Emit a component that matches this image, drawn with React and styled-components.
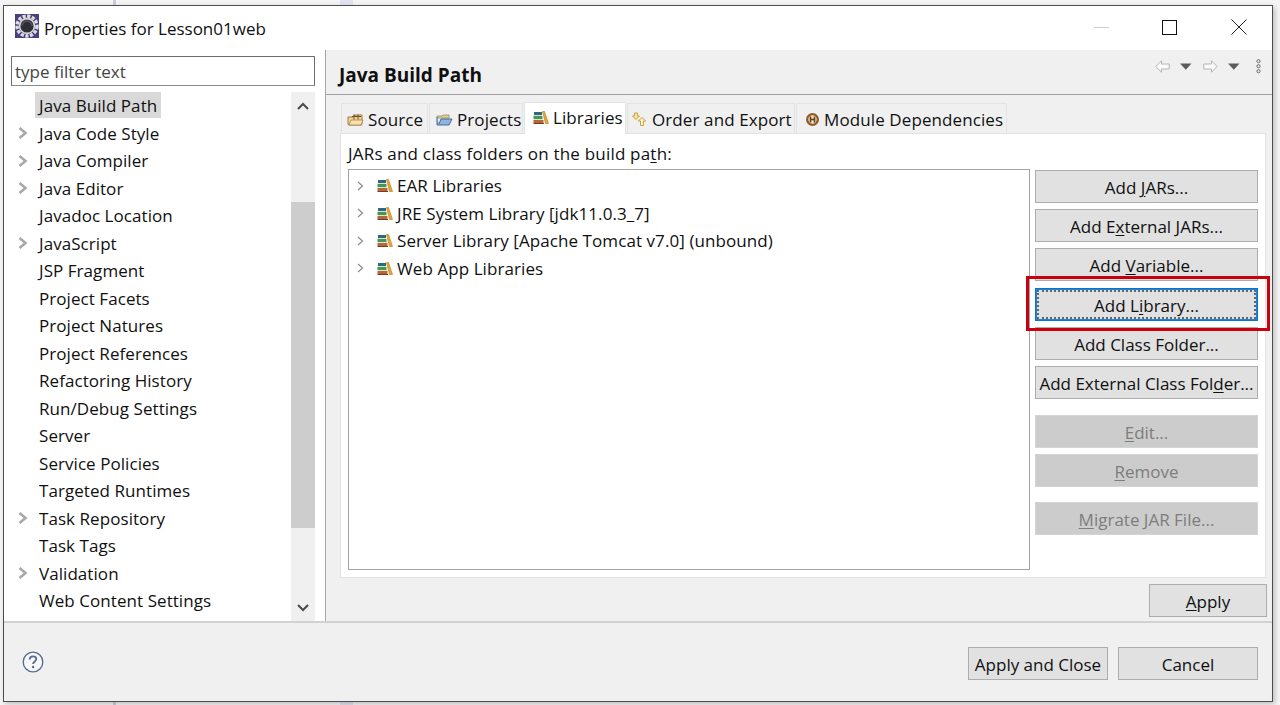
import React from "react";
import styled, { createGlobalStyle } from "styled-components";

const Global = createGlobalStyle`
  html, body { margin: 0; padding: 0; width: 1280px; height: 705px; overflow: hidden; }
  body { font-family: "Open Sans", "Noto Sans", sans-serif; font-size: 17px; color: #101010; }
  * { box-sizing: border-box; }
  u { text-underline-offset: 2px; text-decoration-thickness: 1px; }
`;

const Desktop = styled.div`
  width: 1280px; height: 705px; padding: 5px 7px 3px 3px;
  background:
    linear-gradient(90deg, transparent 113px, #c9cde0 113px, #c9cde0 116px, transparent 116px, transparent 340px, #dfe3ef 340px, #dfe3ef 353px, transparent 353px),
    #f4f4f4;
`;
const Window = styled.div`
  width: 1270px; height: 697px; display: flex; flex-direction: column;
  border: 1px solid #4d4d4d; background: #f0f0f0;
  box-shadow: 2px 2px 5px rgba(0,0,0,.22);
`;
const TitleBar = styled.div`
  height: 44px; flex: none; background: #fff; display: flex; align-items: center; padding: 0 25px 0 11px;
`;
const AppIconWrap = styled.span`
  display: flex; margin-bottom: 5px; flex: none;
`;
const TitleText = styled.div`
  font-size: 17px; margin-left: 5px; flex: 1; letter-spacing: 0;
`;
const WinControls = styled.div`
  display: flex; align-items: center; gap: 54px; margin-bottom: 2px;
  & > :first-child { margin-right: -1px; }
`;
const Main = styled.div`
  flex: 1; min-height: 0; display: flex;
`;
const Sidebar = styled.div`
  width: 322px; flex: none; background: #fff; border-right: 1px solid #a5a5a5; padding: 6px 10px 0 7px;
  display: flex; flex-direction: column;
`;
const Filter = styled.div`
  height: 30px; flex: none; border: 1px solid #6f6f6f; border-bottom-color: #8a8a8a; padding-left: 3px;
  display: flex; align-items: center; color: #444; font-size: 17px;
`;
const SideBody = styled.div`
  flex: 1; min-height: 0; margin-top: 6px; display: flex; overflow: hidden; margin-left: -7px;
`;
const SideTree = styled.div`
  flex: 1; min-width: 0; overflow: hidden;
`;
const SideRow = styled.div`
  height: 27.5px; display: flex; align-items: center; padding-left: 14px;
`;
const ChevBox = styled.span`
  width: 17px; height: 14px; flex: none; display: flex; align-items: center;
`;
const SideLabel = styled.span`
  padding: 0 4px; line-height: 28px; height: 26px; margin-bottom: 1px; white-space: nowrap;
  background: ${p => (p.$sel ? "#d9d9d9" : "transparent")};
  letter-spacing: .06px;
`;
const Scrollbar = styled.div`
  width: 24px; flex: none; background: #f0f0f0; display: flex; flex-direction: column;
`;
const ScrollBtn = styled.div`
  height: 27px; display: flex; align-items: center; justify-content: center; flex: none;
`;
const ScrollThumb = styled.div`
  height: 326px; background: #cdcdcd; margin-top: 83px; margin-bottom: auto;
`;
const Right = styled.div`
  flex: 1; min-width: 0; display: flex; flex-direction: column; padding-bottom: 5px;
`;
const Header = styled.div`
  height: 45px; flex: none; border-bottom: 1px solid #a0a0a0; display: flex; align-items: center; justify-content: space-between; padding: 0 11px 0 13px;
`;
const HeaderTitle = styled.div`
  font-weight: 700; font-size: 19px; margin-top: 6px;
`;
const HeaderTools = styled.div`
  display: flex; align-items: center; margin-bottom: 11px;
`;
const Tabs = styled.div`
  display: flex; align-items: flex-end; margin: 6px 0 0 15px; height: 32px; flex: none; letter-spacing: .1px;
`;
const Tab = styled.div`
  width: ${p => p.$w}px; height: ${p => (p.$active ? 32 : 30)}px; display: flex; align-items: center; gap: 4px;
  padding-left: ${p => p.$pad}px; padding-top: ${p => (p.$active ? 0 : 2)}px; padding-bottom: ${p => (p.$active ? 3 : 0)}px; white-space: nowrap; margin-right: 1px;
  background: ${p => (p.$active ? "#fff" : "#f0f0f0")};
  border: 1px solid #e3e3e3; border-bottom: none;
  position: relative; z-index: ${p => (p.$active ? 1 : 0)};
  margin-bottom: ${p => (p.$active ? "-1px" : "0")};
`;
const TabPanel = styled.div`
  width: 926px; height: 445px; flex: none; margin-left: 14px; background: #fff; border: 1px solid #e3e3e3;
  padding: 7px 7px 7px 7px; display: flex; flex-direction: column;
`;
const PathLabel = styled.div`
  height: 28px; flex: none; line-height: 26px; letter-spacing: .2px;
`;
const PanelBody = styled.div`
  flex: 1; min-height: 0; display: flex; gap: 5px;
`;
const LibTree = styled.div`
  width: 682px; height: 401px; flex: none; border: 1px solid #a3a3a3; padding: 2px 0 0 7px;
`;
const LibRow = styled.div`
  height: 27.5px; display: flex; align-items: center;
`;
const LibChev = styled.span`
  width: 21px; height: 14px; display: flex; align-items: center; flex: none;
`;
const LibText = styled.span`
  margin-left: 4px; white-space: nowrap; letter-spacing: .08px;
`;
const ButtonCol = styled.div`
  width: 223px; flex: none; display: flex; flex-direction: column; padding-top: 1px; position: relative;
`;
const Btn = styled.div`
  height: 33px; width: ${p => p.$width ? p.$width + "px" : "100%"}; flex: none;
  display: flex; align-items: center; justify-content: center; white-space: nowrap;
  background: ${p => (p.$disabled ? "#cccccc" : "#e1e1e1")};
  color: ${p => (p.$disabled ? "#7d7d7d" : "#101010")};
  border: 1px solid ${p => (p.$disabled ? "#d4d4d4" : p.$focus ? "#0078d7" : "#adadad")};
  margin-top: ${p => p.$mt || 0}px;
  padding-top: 1px;
  letter-spacing: 0;
  ${p => p.$focus ? "outline: 2px dotted #666; outline-offset: -4px; box-shadow: inset 0 0 0 1px #2a7fc9;" : ""}
`;
const Callout = styled.div`
  position: absolute; left: -9px; top: 107px; width: 244px; height: 55px; border: 3px solid #c8000f; pointer-events: none;
`;
const ApplyRow = styled.div`
  display: flex; justify-content: flex-end; padding: 6px 5px 0 0;
`;
const Footer = styled.div`
  height: 80px; flex: none; background: #f0f0f0; border-top: 2px solid #d2d2d2; display: flex; align-items: center; padding: 0 14px 0 18px; position: relative; z-index: 1;
`;
const HelpWrap = styled.div`
  flex: 1; display: flex; align-items: center;
`;
const FootBtns = styled.div`
  display: flex; gap: 10px; margin-top: 3px; letter-spacing: .3px;
`;
const ToolGap = styled.span`
  display: inline-block; width: ${p => p.$w}px; flex: none;
`;

const Chevron = ({ c = "#8c8c8c", bold }) => (
  <svg width="10" height="12" viewBox="0 0 10 12">
    <path d={bold ? "M1.5 1 7.5 6 1.5 11" : "M2 2 6.5 6 2 10"} fill="none" stroke={c} strokeWidth={bold ? 2.6 : 1.2} />
  </svg>
);
const LibIcon = () => (
  <svg width="16" height="13" viewBox="0 0 16 13">
    <rect x="1" y="1" width="8" height="3" fill="#2b6a80" />
    <rect x="1" y="4" width="8" height=".8" fill="#dcd9b8" />
    <rect x="0.5" y="5" width="9" height="3" fill="#3f9a57" />
    <rect x="0.5" y="8" width="9.5" height=".8" fill="#e5dcc0" />
    <rect x="0.5" y="9" width="10" height="3" fill="#b8663a" />
    <rect x="0.5" y="12" width="10.5" height="1" fill="#6e4020" />
    <path d="M9.5 .5 11.5 .5 15.5 12.5 12.5 12.5Z" fill="#e8a838" stroke="#b77a1c" strokeWidth=".6" />
  </svg>
);
const SourceIcon = () => (
  <svg width="17" height="14" viewBox="0 0 17 14">
    <path d="M1 4h5l1-2h8v9a1 1 0 0 1-1 1H2a1 1 0 0 1-1-1Z" fill="#f1d596" stroke="#9c7b3f" />
    <path d="M7 1.5v5M11 1.5v5M5 3.5h9" stroke="#6b5228" strokeWidth="1" />
    <path d="M2 12l2-5h12l-2 5Z" fill="#f6e2b0" stroke="#a38546" strokeWidth=".8" />
  </svg>
);
const ProjectIcon = () => (
  <svg width="17" height="14" viewBox="0 0 17 14">
    <path d="M1 3h5l1-1h6v3H1Z" fill="#e6d18e" stroke="#8a8a6a" strokeWidth=".8" />
    <path d="M1 4v8h12l3-6H5l-2 5" fill="#8fb4dd" stroke="#46689a" strokeWidth="1" />
  </svg>
);
const OrderIcon = () => (
  <svg width="16" height="15" viewBox="0 0 16 15">
    <path d="M2.5 1h3v3h2L4 7.5.5 4h2Z" fill="#f6e3a5" stroke="#c49a30" strokeWidth=".9" />
    <path d="M10 5.5 13.7 9H11.5v4.5h-3V9H6.3Z" fill="#fff4c8" stroke="#c49a30" strokeWidth=".9" />
  </svg>
);
const ModuleIcon = () => (
  <svg width="15" height="15" viewBox="0 0 15 15">
    <circle cx="7.5" cy="7.5" r="6.5" fill="#8f5a26" />
    <circle cx="7.5" cy="7.5" r="4.2" fill="#efe4cf" />
    <path d="M5.5 4.5v6M9.5 4.5v6M5.5 7.5h4" stroke="#6b3f14" strokeWidth="1.6" />
  </svg>
);
const AppIcon = () => (
  <svg width="24" height="24" viewBox="0 0 24 24">
    <rect width="24" height="24" fill="#4b3f7e" />
    <circle cx="12" cy="12" r="10" fill="none" stroke="#dedede" strokeWidth="3.4" strokeDasharray="3.2 1.5" />
    <circle cx="12" cy="12" r="8.2" fill="#dcdcdc" />
    <circle cx="12" cy="12" r="6.6" fill="#2e2d3a" />
    <path d="M7 12a5 5 0 0 1 10 0" fill="none" stroke="#5a5868" strokeWidth="1.4" />
  </svg>
);
const MinIcon = () => <svg width="15" height="15" viewBox="0 0 15 15"><path d="M0 7.5h15" stroke="#cfcfcf" strokeWidth="1" /></svg>;
const MaxIcon = () => <svg width="15" height="15" viewBox="0 0 15 15"><rect x=".5" y=".5" width="14" height="14" fill="none" stroke="#111" /></svg>;
const CloseIcon = () => <svg width="16" height="16" viewBox="0 0 16 16"><path d="M.5.5l15 15M15.5.5l-15 15" stroke="#222" strokeWidth="1" /></svg>;
const NavArrow = ({ d }) => (
  <svg width="15" height="13" viewBox="0 0 15 13">
    <path d={d} fill="#fbfbfb" stroke="#b4b4b4" />
  </svg>
);
const Tri = () => <svg width="12" height="7" viewBox="0 0 12 7"><path d="M0 .5h11.5L5.8 6.8Z" fill="#5b5b62" /></svg>;
const Dots = () => (
  <svg width="5" height="15" viewBox="0 0 5 15">
    {[2.2, 7.2, 12.2].map(y => <circle key={y} cx="2.5" cy={y} r="1.6" fill="none" stroke="#6a6a6a" strokeWidth="1" />)}
  </svg>
);
const Help = () => (
  <svg width="22" height="22" viewBox="0 0 22 22">
    <circle cx="11" cy="11" r="9.8" fill="#f7f8fb" stroke="#54688c" strokeWidth="1.3" />
    <path d="M7.7 8.4c0-2 1.5-3 3.4-3s3.2 1.1 3.2 2.7c0 2.5-3.2 2.3-3.2 5" fill="none" stroke="#5a6b88" strokeWidth="1.8" />
    <circle cx="11.1" cy="16" r="1.2" fill="#5a6b88" />
  </svg>
);
const ScrollArrow = ({ d }) => (
  <svg width="12" height="8" viewBox="0 0 12 8"><path d={d} fill="none" stroke="#4a4a4a" strokeWidth="2" /></svg>
);

const sideItems = [
  ["Java Build Path", false, true],
  ["Java Code Style", true],
  ["Java Compiler", true],
  ["Java Editor", true],
  ["Javadoc Location"],
  ["JavaScript", true],
  ["JSP Fragment"],
  ["Project Facets"],
  ["Project Natures"],
  ["Project References"],
  ["Refactoring History"],
  ["Run/Debug Settings"],
  ["Server"],
  ["Service Policies"],
  ["Targeted Runtimes"],
  ["Task Repository", true],
  ["Task Tags"],
  ["Validation", true],
  ["Web Content Settings"],
  ["Web Page Editor"],
];
const libs = ["EAR Libraries", "JRE System Library [jdk11.0.3_7]", "Server Library [Apache Tomcat v7.0] (unbound)", "Web App Libraries"];

export default function App() {
  return (
    <Desktop>
      <Global />
      <Window>
        <TitleBar>
          <AppIconWrap><AppIcon /></AppIconWrap>
          <TitleText>Properties for Lesson01web</TitleText>
          <WinControls>
            <MinIcon /><MaxIcon /><CloseIcon />
          </WinControls>
        </TitleBar>
        <Main>
          <Sidebar>
            <Filter>type filter text</Filter>
            <SideBody>
              <SideTree>
                {sideItems.map(([t, exp, sel]) => (
                  <SideRow key={t}>
                    <ChevBox>{exp ? <Chevron c="#a8a8a8" bold /> : null}</ChevBox>
                    <SideLabel $sel={sel}>{t}</SideLabel>
                  </SideRow>
                ))}
              </SideTree>
              <Scrollbar>
                <ScrollBtn><ScrollArrow d="M1 7 6 2l5 5" /></ScrollBtn>
                <ScrollThumb />
                <ScrollBtn><ScrollArrow d="M1 1l5 5 5-5" /></ScrollBtn>
              </Scrollbar>
            </SideBody>
          </Sidebar>
          <Right>
            <Header>
              <HeaderTitle>Java Build Path</HeaderTitle>
              <HeaderTools>
                <NavArrow d="M.8 6.5 6.5.8V4h7.7v5H6.5v3.2Z" /><ToolGap $w={10} /><Tri /><ToolGap $w={11} />
                <NavArrow d="M14.2 6.5 8.5.8V4H.8v5h7.7v3.2Z" /><ToolGap $w={10} /><Tri /><ToolGap $w={16} /><Dots />
              </HeaderTools>
            </Header>
            <Tabs>
              <Tab $w={87} $pad={5}><SourceIcon /><span>Source</span></Tab>
              <Tab $w={94} $pad={6}><ProjectIcon /><span>Projects</span></Tab>
              <Tab $w={102} $active $pad={8}><LibIcon /><span>Libraries</span></Tab>
              <Tab $w={168} $pad={4}><OrderIcon /><span>Order and Export</span></Tab>
              <Tab $w={211} $pad={8}><ModuleIcon /><span>Module Dependencies</span></Tab>
            </Tabs>
            <TabPanel>
              <PathLabel>JARs and class folders on the build pa<u>t</u>h:</PathLabel>
              <PanelBody>
                <LibTree>
                  {libs.map(t => (
                    <LibRow key={t}>
                      <LibChev><Chevron c="#8d8d8d" /></LibChev>
                      <LibIcon />
                      <LibText>{t}</LibText>
                    </LibRow>
                  ))}
                </LibTree>
                <ButtonCol>
                  <Btn><span>Add <u>J</u>ARs...</span></Btn>
                  <Btn $mt={6}><span>Add E<u>x</u>ternal JARs...</span></Btn>
                  <Btn $mt={6}><span>Add <u>V</u>ariable...</span></Btn>
                  <Btn $mt={7} $focus><span>Add L<u>i</u>brary...</span></Btn>
                  <Btn $mt={6}><span>Add Class Folder...</span></Btn>
                  <Btn $mt={6}><span>Add External Class Fol<u>d</u>er...</span></Btn>
                  <Btn $mt={16} $disabled><span><u>E</u>dit...</span></Btn>
                  <Btn $mt={6} $disabled><span><u>R</u>emove</span></Btn>
                  <Btn $mt={15} $disabled><span><u>M</u>igrate JAR File...</span></Btn>
                  <Callout />
                </ButtonCol>
              </PanelBody>
            </TabPanel>
            <ApplyRow>
              <Btn $width={118}><span><u>A</u>pply</span></Btn>
            </ApplyRow>
          </Right>
        </Main>
        <Footer>
          <HelpWrap><Help /></HelpWrap>
          <FootBtns>
            <Btn $width={140}>Apply and Close</Btn>
            <Btn $width={140}>Cancel</Btn>
          </FootBtns>
        </Footer>
      </Window>
    </Desktop>
  );
}
